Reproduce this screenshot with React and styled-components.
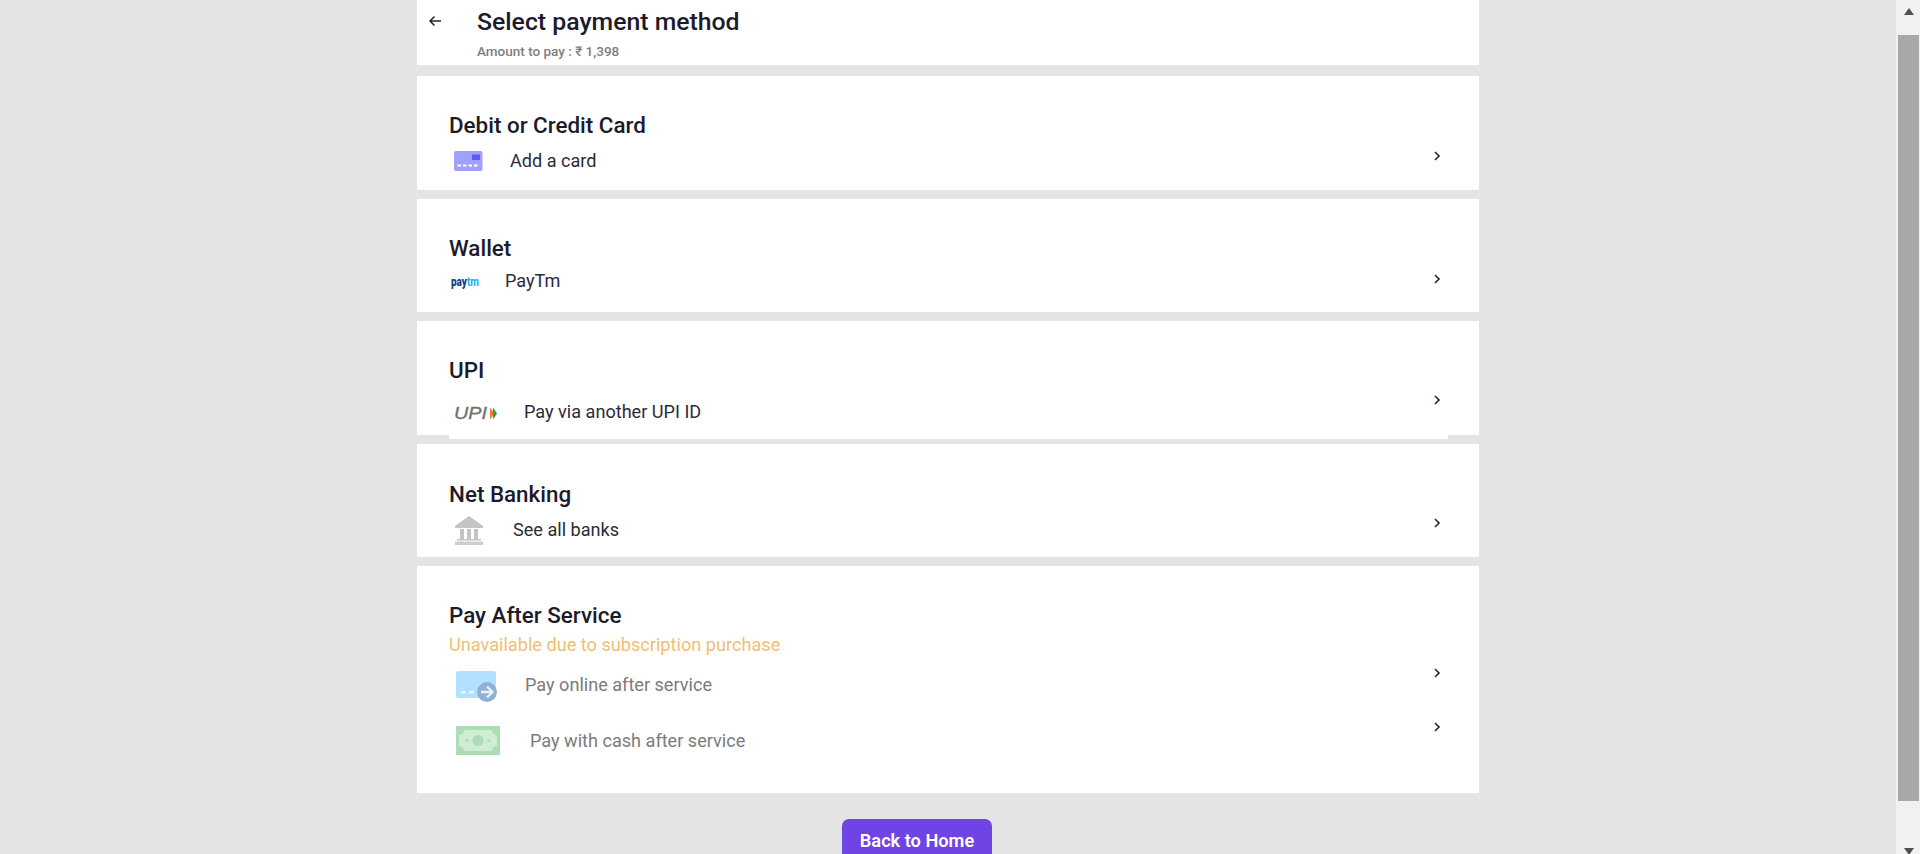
import React from 'react'
import styled, { createGlobalStyle } from 'styled-components'

const GlobalStyle = createGlobalStyle`
  html, body {
    margin: 0;
    padding: 0;
    height: 100%;
    overflow: hidden;
    background: #e4e4e4;
    font-family: Roboto, "Noto Sans", sans-serif;
  }
`

const Shell = styled.div`
  display: flex;
  height: 854px;
  overflow: hidden;
  background: #e4e4e4;
`
const Main = styled.main`
  flex: 1;
  display: flex;
  flex-direction: column;
  align-items: center;
  overflow: hidden;
`
const Column = styled.div`
  width: 1062px;
  display: flex;
  flex-direction: column;
  gap: 9px;
`
const Header = styled.header`
  height: 65px;
  flex: none;
  background: #fff;
  margin-bottom: 2px;
  display: flex;
  align-items: flex-start;
`
const BackSlot = styled.div`
  width: 60px;
  height: 42px;
  display: flex;
  align-items: center;
  padding-left: 11px;
  box-sizing: border-box;
`
const HeadText = styled.div`
  display: flex;
  flex-direction: column;
`
const PageTitle = styled.h1`
  margin: 7px 0 0;
  font-size: 24.8px;
  line-height: 30px;
  font-weight: 500;
  color: #1b1b2b;
`
const Amount = styled.span`
  margin-top: 6px;
  font-size: 13.5px;
  line-height: 16px;
  font-weight: 500;
  color: #7e7e7e;
`
const Card = styled.section`
  height: ${(p) => p.h || 114}px;
  flex: none;
  box-sizing: border-box;
  background: #fff;
  padding: ${(p) => p.pad || 36}px 31px 0 32px;
`
const CardTitle = styled.h2`
  margin: 0;
  font-size: 22.4px;
  line-height: 26px;
  font-weight: 500;
  color: #1b1b2b;
`
const Notice = styled.div`
  margin-top: 6px;
  font-size: 18.15px;
  line-height: 22px;
  color: #f0bf72;
`
const Row = styled.div`
  display: flex;
  align-items: center;
  box-sizing: border-box;
  height: ${(p) => p.h}px;
  margin-top: ${(p) => p.top || 0}px;
  padding-top: ${(p) => p.inset || 0}px;
  background: #fff;
`
const IconSlot = styled.div`
  flex: none;
  width: ${(p) => p.w}px;
  padding-left: ${(p) => p.pad}px;
  box-sizing: border-box;
  display: flex;
  align-items: center;
  margin-top: ${(p) => p.drop || 0}px;
`
const Label = styled.span`
  flex: 1;
  font-size: 18.1px;
  line-height: 24px;
  color: ${(p) => (p.muted ? '#7b7b7b' : '#2b2b3b')};
`
const Chevron = styled.svg`
  flex: none;
  width: 8px;
  height: 12px;
  margin-right: 7px;
  margin-bottom: ${(p) => p.lift * 2}px;
  fill: none;
  stroke: #1f2530;
  stroke-width: 1.6;
`
const HomeButton = styled.button`
  flex: none;
  align-self: flex-start;
  width: 150px;
  height: 42px;
  margin: 17px 0 0 425px;
  border: 0;
  border-radius: 7px;
  background: #7044e4;
  color: #fff;
  font-family: inherit;
  font-size: 18.2px;
  font-weight: 600;
  padding: 0;
`
const Scrollbar = styled.aside`
  flex: none;
  width: 24px;
  box-sizing: border-box;
  padding: 0 1px 0 2px;
  background: #f1f1f1;
  display: flex;
  flex-direction: column;
`
const ScrollEnd = styled.div`
  height: ${(p) => p.h}px;
  flex: none;
  display: flex;
  justify-content: center;
  align-items: flex-start;
  padding-top: ${(p) => p.pad}px;
  box-sizing: border-box;
`
const Thumb = styled.div`
  height: 766px;
  flex: none;
  background: #a8a8a8;
`
const Arrow = styled.div`
  width: 0;
  height: 0;
  border-left: 5.5px solid transparent;
  border-right: 5.5px solid transparent;
  ${(p) => (p.down ? 'border-top' : 'border-bottom')}: 7px solid #505050;
`

const BackArrow = () => (
  <svg width="14" height="14" viewBox="0 0 14 14" fill="none" stroke="#1f2530" strokeWidth="1.5">
    <path d="M13 7H2M6.5 2.5 2 7l4.5 4.5" />
  </svg>
)

const CardIcon = () => (
  <svg width="29" height="20" viewBox="0 0 29 20">
    <rect width="28.5" height="20" rx="2" fill="#a1a1fb" />
    <rect x="18" y="3.5" width="8" height="5.5" fill="#5b5bee" />
    <path d="M3.5 13.5h3.5v2H3.5zM9 13.5h3.5v2H9zM14.5 13.5H18v2h-3.5zM20 13.5h3.5v2H20z" fill="#fff" />
  </svg>
)

const PaytmIcon = () => (
  <svg width="28" height="13" viewBox="0 0 28 13" style={{ overflow: 'visible' }}>
    <text x="0" y="10.5" fontFamily="Roboto, sans-serif" fontWeight="900" fontSize="13" textLength="28" lengthAdjust="spacingAndGlyphs" fill="#123f91">
      pay<tspan fill="#12aef0" fontWeight="700">tm</tspan>
    </text>
  </svg>
)

const UpiIcon = () => (
  <svg width="44" height="16" viewBox="0 0 44 16" style={{ overflow: 'visible' }}>
    <text x="0" y="14" fontFamily="Liberation Sans, sans-serif" fontStyle="italic" fontSize="16.5" stroke="#707070" strokeWidth="0.3" textLength="33" lengthAdjust="spacingAndGlyphs" fill="#707070">UPI</text>
    <path d="M36 2.5 40.5 8.5 36 14.5z" fill="#ef7d22" />
    <path d="M39 2.5 43 8.5 39 14.5z" fill="#2f9e3f" />
  </svg>
)

const BankIcon = () => (
  <svg width="30" height="29" viewBox="0 0 30 29" fill="#c4c4c4">
    <path d="M15 0 29 10v2H1v-2z" />
    <path d="M6 13h4v10H6zM13 13h4v10h-4zM20 13h4v10h-4z" />
    <path d="M3 23h24v1.5H3z" />
    <path d="M1 25.5h28V29H1z" fill="#cfcfcf" />
  </svg>
)

const OnlineIcon = () => (
  <svg width="41" height="31" viewBox="0 0 41 31">
    <rect x="0" y="0" width="40" height="27" rx="2" fill="#b3e0ff" />
    <path d="M5 20h5v2.5H5zM13 20h5v2.5h-5z" fill="#e6f5ff" />
    <circle cx="31" cy="21" r="10" fill="#90b0d6" />
    <path d="M25 21h11M31 15.5l5.5 5.5-5.5 5.5" fill="none" stroke="#e6f1fa" strokeWidth="2.4" />
  </svg>
)

const CashIcon = () => (
  <svg width="44" height="29" viewBox="0 0 44 29">
    <rect width="44" height="29" fill="#aeddb5" />
    <path d="M8 4h28c0 3 2 5 5 5v11c-3 0-5 2-5 5H8c0-3-2-5-5-5V9c3 0 5-2 5-5z" fill="#cdeed2" />
    <circle cx="22" cy="14.5" r="5.5" fill="#aeddb5" />
    <circle cx="11" cy="14.5" r="1.6" fill="#aeddb5" />
    <circle cx="33" cy="14.5" r="1.6" fill="#aeddb5" />
  </svg>
)

const Next = ({ lift }) => (
  <Chevron lift={lift} viewBox="0 0 8 12">
    <path d="M2 2l4 4-4 4" />
  </Chevron>
)

const App = () => {
  return (
    <>
      <GlobalStyle />
      <Shell>
        <Main>
          <Column>
            <Header>
              <BackSlot>
                <BackArrow />
              </BackSlot>
              <HeadText>
                <PageTitle>Select payment method</PageTitle>
                <Amount>Amount to pay : ₹ 1,398</Amount>
              </HeadText>
            </Header>

            <Card>
              <CardTitle>Debit or Credit Card</CardTitle>
              <Row h={24} top={11}>
                <IconSlot w={61} pad={5}><CardIcon /></IconSlot>
                <Label>Add a card</Label>
                <Next lift={5} />
              </Row>
            </Card>

            <Card h={113}>
              <CardTitle>Wallet</CardTitle>
              <Row h={24} top={8}>
                <IconSlot w={56} pad={2}><PaytmIcon /></IconSlot>
                <Label>PayTm</Label>
                <Next lift={2} />
              </Row>
            </Card>

            <Card>
              <CardTitle>UPI</CardTitle>
              <Row h={56} inset={2}>
                <IconSlot w={75} pad={5} drop={2}><UpiIcon /></IconSlot>
                <Label>Pay via another UPI ID</Label>
                <Next lift={12} />
              </Row>
            </Card>

            <Card h={113} pad={37}>
              <CardTitle>Net Banking</CardTitle>
              <Row h={28} top={9}>
                <IconSlot w={64} pad={5}><BankIcon /></IconSlot>
                <Label>See all banks</Label>
                <Next lift={7} />
              </Row>
            </Card>

            <Card h={227}>
              <CardTitle>Pay After Service</CardTitle>
              <Notice>Unavailable due to subscription purchase</Notice>
              <Row h={31} top={13}>
                <IconSlot w={76} pad={7} drop={4}><OnlineIcon /></IconSlot>
                <Label muted>Pay online after service</Label>
                <Next lift={12} />
              </Row>
              <Row h={29} top={26}>
                <IconSlot w={81} pad={7}><CashIcon /></IconSlot>
                <Label muted>Pay with cash after service</Label>
                <Next lift={14} />
              </Row>
            </Card>

            <HomeButton>Back to Home</HomeButton>
          </Column>
        </Main>
        <Scrollbar>
          <ScrollEnd h={35} pad={8}><Arrow /></ScrollEnd>
          <Thumb />
          <ScrollEnd h={53} pad={47}><Arrow down /></ScrollEnd>
        </Scrollbar>
      </Shell>
    </>
  )
}

export default App
